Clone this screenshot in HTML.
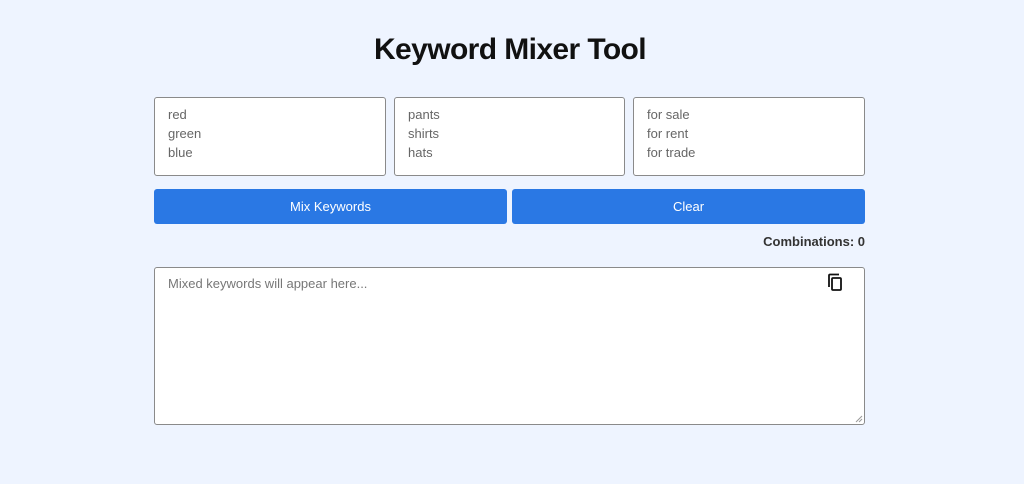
<!DOCTYPE html>
<html><head><style>
body{margin:0;background:#eef4ff;font-family:"Liberation Sans",sans-serif;width:1024px;height:484px;overflow:hidden;position:relative}
h1{position:absolute;top:33px;left:0;width:1020px;text-align:center;margin:0;font-size:30px;font-weight:bold;color:#111;letter-spacing:-0.6px}
.box{position:absolute;top:97px;height:79px;background:#fff;border:1px solid #8a8a8a;border-radius:3px;box-sizing:border-box;padding:7px 13px;font-size:13px;line-height:19px;color:#666}
.btn{position:absolute;top:189px;height:35px;background:#2a78e4;border-radius:3px;color:#fff;font-size:13px;text-align:center;line-height:35px}
.comb{position:absolute;top:234px;right:159px;font-size:13px;font-weight:bold;color:#333}
.out{position:absolute;top:267px;left:154px;width:711px;height:158px;background:#fff;border:1px solid #8a8a8a;border-radius:3px;box-sizing:border-box;padding:8px 13px;font-size:13px;color:#777}
</style></head><body>
<h1>Keyword Mixer Tool</h1>
<div class="box" style="left:154px;width:232px">red<br>green<br>blue</div>
<div class="box" style="left:394px;width:231px">pants<br>shirts<br>hats</div>
<div class="box" style="left:633px;width:232px">for sale<br>for rent<br>for trade</div>
<div class="btn" style="left:154px;width:353px">Mix Keywords</div>
<div class="btn" style="left:512px;width:353px">Clear</div>
<div class="comb">Combinations: 0</div>
<div class="out">Mixed keywords will appear here...
<svg style="position:absolute;left:672px;top:5px" width="18" height="20" viewBox="0 0 18 20"><path d="M2 14V2.5Q2 1.5 3 1.5H12" fill="none" stroke="#111" stroke-width="1.8"/><rect x="5" y="5" width="9" height="12" rx="1" fill="none" stroke="#111" stroke-width="1.8"/></svg>
<svg style="position:absolute;right:1px;bottom:1px" width="8" height="8"><path d="M7 1L1 7M7 4L4 7" stroke="#999"/></svg>
</div>
</body></html>
